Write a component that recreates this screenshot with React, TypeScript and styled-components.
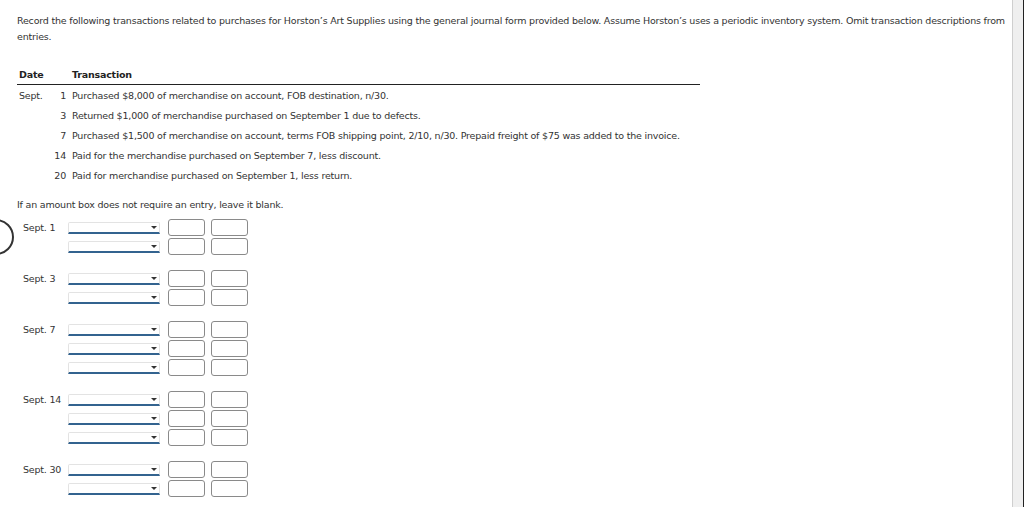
import styled, { createGlobalStyle } from 'styled-components';

const GlobalStyle = createGlobalStyle`
  html, body {
    margin: 0;
    padding: 0;
    background: #fff;
  }
  body {
    font-family: 'DejaVu Sans', Verdana, sans-serif;
    font-size: 9.5px;
    letter-spacing: -0.2px;
    color: #333;
  }
`;

interface Transaction {
  day: number;
  text: string;
}

interface Entry {
  label: string;
  lines: number;
}

const transactions: Transaction[] = [
  { day: 1, text: 'Purchased $8,000 of merchandise on account, FOB destination, n/30.' },
  { day: 3, text: 'Returned $1,000 of merchandise purchased on September 1 due to defects.' },
  {
    day: 7,
    text: 'Purchased $1,500 of merchandise on account, terms FOB shipping point, 2/10, n/30. Prepaid freight of $75 was added to the invoice.',
  },
  { day: 14, text: 'Paid for the merchandise purchased on September 7, less discount.' },
  { day: 20, text: 'Paid for merchandise purchased on September 1, less return.' },
];

const entries: Entry[] = [
  { label: 'Sept. 1', lines: 2 },
  { label: 'Sept. 3', lines: 2 },
  { label: 'Sept. 7', lines: 3 },
  { label: 'Sept. 14', lines: 3 },
  { label: 'Sept. 30', lines: 2 },
];

export default function App() {
  return (
    <>
      <GlobalStyle />
      <Page>
        <Main>
          <Intro>
            Record the following transactions related to purchases for Horston’s Art Supplies using the general
            journal form provided below. Assume Horston’s uses a periodic inventory system. Omit transaction
            descriptions from entries.
          </Intro>

          <TxTable>
            <HeadRow>
              <DateHead>Date</DateHead>
              <TxHead>Transaction</TxHead>
            </HeadRow>
            {transactions.map((t, i) => (
              <TxRow key={t.day}>
                <Month>{i === 0 ? 'Sept.' : ''}</Month>
                <Day>{t.day}</Day>
                <TxText>{t.text}</TxText>
              </TxRow>
            ))}
          </TxTable>

          <Note>If an amount box does not require an entry, leave it blank.</Note>

          <Journal>
            <Marker />
            {entries.map((e) => (
              <EntryGroup key={e.label}>
                {Array.from({ length: e.lines }).map((_, i) => (
                  <EntryLine key={i}>
                    <EntryLabel>{i === 0 ? e.label : ''}</EntryLabel>
                    <AccountSelect>
                      <Caret />
                    </AccountSelect>
                    <AmountBox />
                    <AmountBox />
                  </EntryLine>
                ))}
              </EntryGroup>
            ))}
          </Journal>
        </Main>
        <ScrollTrack />
      </Page>
    </>
  );
}

const Page = styled.div`
  display: flex;
  width: 1024px;
  height: 507px;
  overflow: hidden;
`;

const Main = styled.div`
  flex: 1;
  padding: 13px 0 0 17px;
  position: relative;
`;

const ScrollTrack = styled.div`
  width: 12px;
  height: 100%;
  background: #efefef;
  border-left: 1px solid #cfcfcf;
  border-right: 1px solid #222;
  box-sizing: border-box;
`;

const Intro = styled.p`
  margin: 0;
  line-height: 16px;
  padding-right: 0;
`;

const TxTable = styled.div`
  margin-top: 21px;
  width: 683px;
`;

const HeadRow = styled.div`
  display: flex;
  align-items: center;
  height: 16px;
  padding-bottom: 2px;
  border-bottom: 1px solid #222;
  font-weight: bold;
  color: #222;
`;

const DateHead = styled.div`
  width: 53px;
  padding-left: 2px;
`;

const TxHead = styled.div``;

const TxRow = styled.div`
  display: flex;
  align-items: center;
  height: 20px;
  white-space: nowrap;
`;

const Month = styled.div`
  flex-shrink: 0;
  width: 30px;
  padding-left: 2px;
`;

const Day = styled.div`
  flex-shrink: 0;
  width: 17px;
  text-align: right;
`;

const TxText = styled.div`
  padding-left: 6px;
`;

const Note = styled.p`
  margin: 13px 0 0;
  line-height: 14px;
`;

const Journal = styled.div`
  position: relative;
  margin-top: 7px;
  display: flex;
  flex-direction: column;
  gap: 15px;
  padding-left: 6px;
`;

const Marker = styled.div`
  position: absolute;
  left: -39px;
  top: 0;
  width: 32px;
  height: 32px;
  border: 2px solid #333;
  border-radius: 50%;
`;

const EntryGroup = styled.div`
  display: flex;
  flex-direction: column;
  gap: 2px;
`;

const EntryLine = styled.div`
  display: flex;
  align-items: center;
  height: 17px;
`;

const EntryLabel = styled.div`
  width: 45px;
`;

const AccountSelect = styled.div`
  position: relative;
  width: 92px;
  height: 12px;
  box-sizing: border-box;
  border: 1px solid #e3e3e3;
  border-bottom: 2px solid #33638f;
  border-radius: 2px 2px 0 0;
  background: #fff;
  margin-right: 8px;
`;

const Caret = styled.span`
  position: absolute;
  right: 2px;
  top: 3px;
  width: 0;
  height: 0;
  border-left: 3px solid transparent;
  border-right: 3px solid transparent;
  border-top: 3px solid #333;
`;

const AmountBox = styled.div`
  width: 37px;
  height: 17px;
  box-sizing: border-box;
  border: 1px solid #8a8a8a;
  border-radius: 3px;
  background: #fff;
  margin-right: 6px;
`;
